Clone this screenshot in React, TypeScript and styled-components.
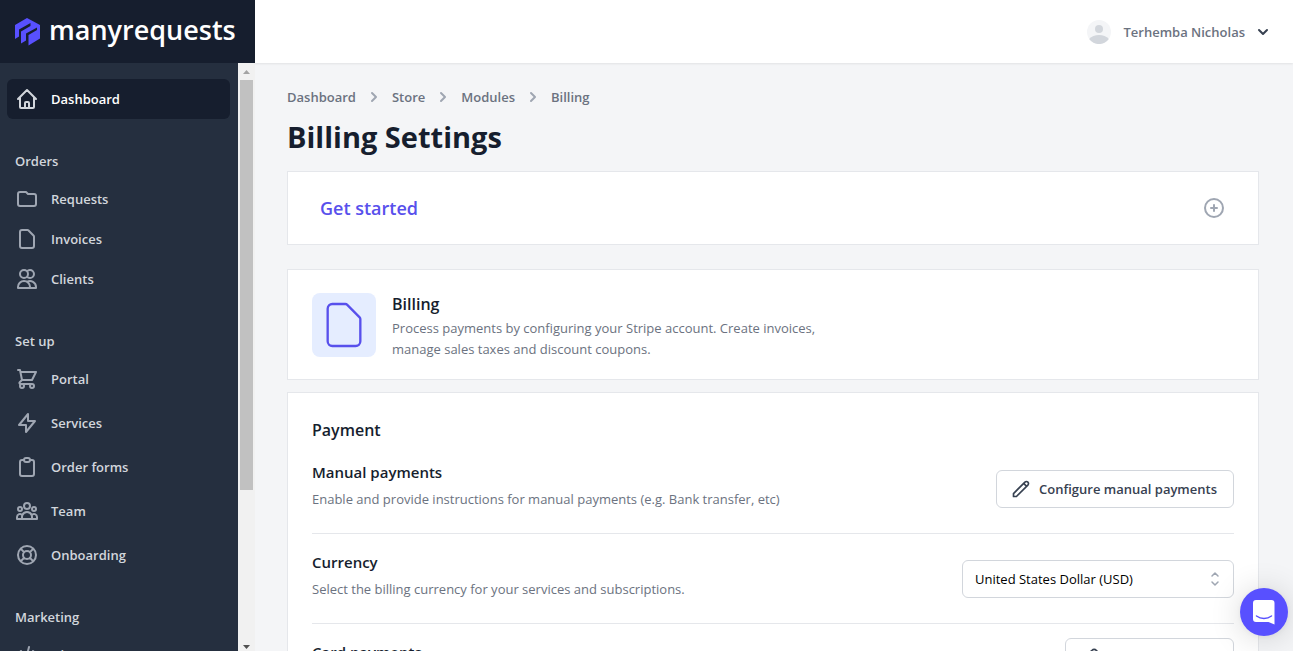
import React from "react";
import styled, { createGlobalStyle, css } from "styled-components";

const GlobalStyle = createGlobalStyle`
  *, *::before, *::after { box-sizing: border-box; }
  body {
    margin: 0;
    background: #f4f5f7;
    color: #161e2e;
    font-family: "Open Sans", "Noto Sans", sans-serif;
    font-size: 14px;
    line-height: 20px;
  }
  h1, h2, h3, p, ul, ol { margin: 0; padding: 0; }
  ul, ol { list-style: none; }
  button, select { font: inherit; cursor: pointer; }
  a { color: inherit; text-decoration: none; }
`;

const Shell = styled.div`
  display: flex;
  height: 100vh;
  overflow: hidden;
`;

const Sidebar = styled.aside`
  display: flex;
  flex-direction: column;
  flex: 0 0 255px;
  background: #252f3f;
`;

const Brand = styled.a`
  display: flex;
  flex: 0 0 63px;
  align-items: center;
  gap: 8px;
  padding: 0 14px;
  background: #161e2e;
  color: #fff;
  font-size: 27px;
  font-weight: 600;
  line-height: 36px;
`;

const BrandName = styled.span`
  padding-bottom: 4px;
`;

const SidebarBody = styled.div`
  display: flex;
  flex: 1;
  min-height: 0;
`;

const Nav = styled.nav`
  flex: 1;
  overflow: hidden;
  padding: 16px 8px 0 7px;
`;

const NavHeading = styled.h2`
  margin: 32px 8px 8px;
  color: #d2d6dc;
  font-size: 13px;
  font-weight: 600;
  line-height: 20px;
`;

const NavList = styled.ul<{ $gap?: number }>`
  display: flex;
  flex-direction: column;
  gap: ${(p) => p.$gap ?? 0}px;
`;

const NavLink = styled.a<{ $active?: boolean }>`
  display: flex;
  align-items: center;
  gap: 12px;
  height: 40px;
  padding: 0 8px;
  border-radius: 6px;
  color: #d2d6dc;
  font-size: 13px;
  font-weight: 600;

  svg { color: #9fa6b2; }

  ${(p) =>
    p.$active &&
    css`
      background: #161e2e;
      color: #fff;
      svg { color: #d2d6dc; }
    `}
`;

const ScrollTrack = styled.div`
  display: flex;
  flex-direction: column;
  flex: 0 0 17px;
  justify-content: space-between;
  padding: 0 2px;
  background: #f1f1f1;
`;

const ScrollThumb = styled.div`
  flex: 0 1 410px;
  margin-bottom: auto;
  background: #c1c1c1;
`;

const ScrollArrow = styled.svg`
  display: block;
  flex: 0 0 17px;
  width: 13px;
`;

const Page = styled.div`
  display: flex;
  flex: 1;
  flex-direction: column;
  min-width: 0;
`;

const TopBar = styled.header`
  z-index: 1;
  display: flex;
  flex: 0 0 63px;
  align-items: center;
  justify-content: flex-end;
  padding: 0 20px;
  background: #fff;
  box-shadow: 0 1px 2px rgba(0, 0, 0, 0.08);
`;

const AccountButton = styled.button`
  display: flex;
  align-items: center;
  padding: 0;
  border: 0;
  background: none;
  color: #6b7280;
  font-size: 13px;
  font-weight: 600;
`;

const AccountName = styled.span`
  margin: 0 8px 0 12px;
`;

const Main = styled.main`
  flex: 1;
  min-height: 0;
  overflow: hidden;
  padding: 24px 34px 0 32px;
`;

const Crumbs = styled.ol`
  display: flex;
  align-items: center;
  color: #6b7280;
  font-size: 13px;
  font-weight: 600;

  li { display: flex; align-items: center; }
  svg { margin: 0 8px; color: #9fa6b2; }
`;

const PageTitle = styled.h1`
  margin: 10px 0 15px;
  font-size: 29px;
  font-weight: 700;
  line-height: 39px;
`;

const Card = styled.section`
  border: 1px solid #e5e7eb;
  background: #fff;
`;

const StartCard = styled(Card)`
  margin-bottom: 24px;
`;

const StartToggle = styled.button`
  display: flex;
  align-items: center;
  justify-content: space-between;
  width: 100%;
  height: 72px;
  padding: 0 32px;
  border: 0;
  background: none;
  color: #5850ec;
  font-size: 18px;
  font-weight: 600;

  svg { color: #9fa6b2; }
`;

const ModuleCard = styled(Card)`
  display: flex;
  gap: 16px;
  margin-bottom: 12px;
  padding: 23px 24px 19px;
`;

const ModuleIcon = styled.div`
  display: grid;
  flex: 0 0 64px;
  height: 64px;
  place-items: center;
  border-radius: 8px;
  background: #e5edff;
  color: #5850ec;
`;

const ModuleTitle = styled.h2`
  margin-bottom: 3px;
  font-size: 16px;
  font-weight: 600;
  line-height: 22px;
`;

const Muted = styled.p`
  color: #6b7280;
  font-size: 13px;
  line-height: 21px;
`;

const ModuleText = styled.div`
  max-width: 448px;
`;

const PaymentCard = styled(Card)`
  padding: 24px;
`;

const SectionTitle = styled.h2`
  font-size: 16px;
  font-weight: 600;
  line-height: 27px;
`;

const SettingRow = styled.div`
  display: flex;
  align-items: flex-start;
  justify-content: space-between;
  padding: 14px 0 23px;
  border-bottom: 1px solid #e5e7eb;
`;

const SettingText = styled.div`
  padding-top: 2px;
`;

const SettingTitle = styled.h3`
  display: block;
  margin-bottom: 5px;
  font-size: 15px;
  font-weight: 600;
  line-height: 24px;
`;

const Control = styled.div<{ $top?: boolean }>`
  padding-top: ${(p) => (p.$top ? 0 : 12)}px;
`;

const OutlineButton = styled.button`
  display: flex;
  align-items: center;
  gap: 8px;
  height: 38px;
  padding: 0 16px 0 14px;
  border: 1px solid #d2d6dc;
  border-radius: 6px;
  background: #fff;
  color: #374151;
  font-size: 13px;
  font-weight: 600;
`;

const SelectBox = styled.div`
  display: grid;
  align-items: center;
  width: 272px;

  > * { grid-area: 1 / 1; }
  svg { justify-self: end; margin-right: 9px; color: #9fa6b2; pointer-events: none; }
`;

const Select = styled.select`
  width: 100%;
  height: 38px;
  padding: 0 40px 0 12px;
  border: 1px solid #d2d6dc;
  border-radius: 6px;
  appearance: none;
  background: #fff;
  color: #000;
  font-size: 13px;
`;

const ChatButton = styled.button`
  position: fixed;
  right: 5px;
  bottom: 15px;
  z-index: 2;
  display: grid;
  width: 48px;
  height: 48px;
  padding: 0;
  place-items: center;
  border: 0;
  border-radius: 50%;
  background: #5850ff;
  box-shadow: 0 1px 6px rgba(0, 0, 0, 0.06), 0 2px 32px rgba(0, 0, 0, 0.16);
`;

const paths: Record<string, string> = {
  home: "M3 12l2-2m0 0l7-7 7 7M5 10v10a1 1 0 001 1h3m10-11l2 2m-2-2v10a1 1 0 01-1 1h-3m-6 0a1 1 0 001-1v-4a1 1 0 011-1h2a1 1 0 011 1v4a1 1 0 001 1m-6 0h6",
  folder: "M3 7v10a2 2 0 002 2h14a2 2 0 002-2V9a2 2 0 00-2-2h-6l-2-2H5a2 2 0 00-2 2z",
  document: "M7 21h10a2 2 0 002-2V9.414a1 1 0 00-.293-.707l-5.414-5.414A1 1 0 0012.586 3H7a2 2 0 00-2 2v14a2 2 0 002 2z",
  users: "M12 4.354a4 4 0 110 5.292M15 21H3v-1a6 6 0 0112 0v1zm0 0h6v-1a6 6 0 00-9-5.197M13 7a4 4 0 11-8 0 4 4 0 018 0z",
  cart: "M3 3h2l.4 2M7 13h10l4-8H5.400M7 13L5.400 5M7 13l-2.293 2.293c-.63.63-.184 1.707.707 1.707H17m0 0a2 2 0 100 4 2 2 0 000-4zm-8 2a2 2 0 11-4 0 2 2 0 014 0z",
  bolt: "M13 10V3L4 14h7v7l9-11h-7z",
  clipboard: "M9 5H7a2 2 0 00-2 2v12a2 2 0 002 2h10a2 2 0 002-2V7a2 2 0 00-2-2h-2M9 5a2 2 0 002 2h2a2 2 0 002-2M9 5a2 2 0 012-2h2a2 2 0 012 2",
  team: "M17 20h5v-2a3 3 0 00-5.356-1.857M17 20H7m10 0v-2c0-.656-.126-1.283-.356-1.857M7 20H2v-2a3 3 0 015.356-1.857M7 20v-2c0-.656.126-1.283.356-1.857m0 0a5.002 5.002 0 019.288 0M15 7a3 3 0 11-6 0 3 3 0 016 0zm6 3a2 2 0 11-4 0 2 2 0 014 0zM7 10a2 2 0 11-4 0 2 2 0 014 0z",
  support: "M18.364 5.636l-3.536 3.536m0 5.656l3.536 3.536M9.172 9.172L5.636 5.636m3.536 9.192l-3.536 3.536M21 12a9 9 0 11-18 0 9 9 0 0118 0zm-5 0a4 4 0 11-8 0 4 4 0 018 0z",
  code: "M10 20l4-16m4 4l4 4-4 4M6 16l-4-4 4-4",
  plus: "M12 9v3m0 0v3m0-3h3m-3 0H9m12 0a9 9 0 11-18 0 9 9 0 0118 0z",
  pencil: "M15.232 5.232l3.536 3.536m-2.036-5.036a2.500 2.500 0 113.536 3.536L6.500 21.036H3v-3.572L16.732 3.732z",
  link: "M13.828 10.172a4 4 0 00-5.656 0l-4 4a4 4 0 105.656 5.656l1.102-1.101m-.758-4.899a4 4 0 005.656 0l4-4a4 4 0 00-5.656-5.656l-1.100 1.100",
};

function Icon({ name, size = 24, stroke = 2 }: { name: string; size?: number; stroke?: number }) {
  return (
    <svg
      width={size}
      height={size}
      viewBox="0 0 24 24"
      fill="none"
      stroke="currentColor"
      strokeWidth={stroke}
      strokeLinecap="round"
      strokeLinejoin="round"
      aria-hidden="true"
    >
      <path d={paths[name]} />
    </svg>
  );
}

function Item({ icon, label, active }: { icon: string; label: string; active?: boolean }) {
  return (
    <li>
      <NavLink href="#" $active={active} aria-current={active ? "page" : undefined}>
        <Icon name={icon} />
        {label}
      </NavLink>
    </li>
  );
}

function LogoMark() {
  return (
    <svg width="27" height="30" viewBox="0 0 27 30" fill="#5850ff" aria-hidden="true">
      <path d="M1 8L13 1L26 8V21.500L14.500 28.500V18L23 13V10.500L12 16.500V23.500L7 26.500V14.500L16.500 9V6L5 12.500V19.500L1 22Z" />
    </svg>
  );
}

const crumbs = ["Dashboard", "Store", "Modules", "Billing"];

export default function App() {
  return (
    <>
      <GlobalStyle />
      <Shell>
        <Sidebar>
          <Brand href="#">
            <LogoMark />
            <BrandName>manyrequests</BrandName>
          </Brand>
          <SidebarBody>
            <Nav aria-label="Main">
              <NavList>
                <Item icon="home" label="Dashboard" active />
              </NavList>
              <NavHeading>Orders</NavHeading>
              <NavList>
                <Item icon="folder" label="Requests" />
                <Item icon="document" label="Invoices" />
                <Item icon="users" label="Clients" />
              </NavList>
              <NavHeading>Set up</NavHeading>
              <NavList $gap={4}>
                <Item icon="cart" label="Portal" />
                <Item icon="bolt" label="Services" />
                <Item icon="clipboard" label="Order forms" />
                <Item icon="team" label="Team" />
                <Item icon="support" label="Onboarding" />
              </NavList>
              <NavHeading>Marketing</NavHeading>
              <NavList>
                <Item icon="code" label="Discounts" />
              </NavList>
            </Nav>
            <ScrollTrack aria-hidden="true">
              <ScrollArrow height="17" viewBox="0 0 13 17">
                <path d="M3 11L6.500 7L10 11Z" fill="#a3a3a3" />
              </ScrollArrow>
              <ScrollThumb />
              <ScrollArrow height="17" viewBox="0 0 13 17">
                <path d="M3 11L6.500 15L10 11Z" fill="#505050" />
              </ScrollArrow>
            </ScrollTrack>
          </SidebarBody>
        </Sidebar>

        <Page>
          <TopBar>
            <AccountButton type="button">
              <svg width="24" height="24" viewBox="0 0 24 24" aria-hidden="true">
                <circle cx="12" cy="12" r="12" fill="#f4f5f7" />
                <circle cx="12" cy="9" r="4" fill="#d2d6dc" />
                <path d="M2.200 19C4.500 16.300 8 15 12 15s7.500 1.300 9.800 4A12 12 0 0 1 2.200 19z" fill="#d2d6dc" />
              </svg>
              <AccountName>Terhemba Nicholas</AccountName>
              <svg width="20" height="20" viewBox="0 0 20 20" fill="#374151" aria-hidden="true">
                <path d="M5.293 7.293a1 1 0 011.414 0L10 10.586l3.293-3.293a1 1 0 111.414 1.414l-4 4a1 1 0 01-1.414 0l-4-4a1 1 0 010-1.414z" />
              </svg>
            </AccountButton>
          </TopBar>
          <Main>
            <nav aria-label="Breadcrumb">
              <Crumbs>
                {crumbs.map((label, i) => (
                  <li key={label}>
                    {i > 0 && (
                      <svg width="20" height="20" viewBox="0 0 20 20" fill="currentColor" aria-hidden="true">
                        <path d="M7.293 14.707a1 1 0 010-1.414L10.586 10 7.293 6.707a1 1 0 011.414-1.414l4 4a1 1 0 010 1.414l-4 4a1 1 0 01-1.414 0z" />
                      </svg>
                    )}
                    <a href="#">{label}</a>
                  </li>
                ))}
              </Crumbs>
            </nav>
            <PageTitle>Billing Settings</PageTitle>

            <StartCard>
              <StartToggle type="button" aria-expanded="false">
                Get started
                <Icon name="plus" />
              </StartToggle>
            </StartCard>

            <ModuleCard>
              <ModuleIcon>
                <Icon name="document" size={56} stroke={1} />
              </ModuleIcon>
              <ModuleText>
                <ModuleTitle>Billing</ModuleTitle>
                <Muted>
                  Process payments by configuring your Stripe account. Create invoices, manage sales taxes and
                  discount coupons.
                </Muted>
              </ModuleText>
            </ModuleCard>

            <PaymentCard>
              <SectionTitle>Payment</SectionTitle>
              <SettingRow>
                <SettingText>
                  <SettingTitle>Manual payments</SettingTitle>
                  <Muted>Enable and provide instructions for manual payments (e.g. Bank transfer, etc)</Muted>
                </SettingText>
                <Control>
                  <OutlineButton type="button">
                    <Icon name="pencil" size={20} />
                    Configure manual payments
                  </OutlineButton>
                </Control>
              </SettingRow>
              <SettingRow>
                <SettingText>
                  <SettingTitle as="label" htmlFor="currency">
                    Currency
                  </SettingTitle>
                  <Muted>Select the billing currency for your services and subscriptions.</Muted>
                </SettingText>
                <Control>
                  <SelectBox>
                    <Select id="currency" defaultValue="usd">
                      <option value="usd">United States Dollar (USD)</option>
                    </Select>
                    <svg width="20" height="20" viewBox="0 0 20 20" fill="none" stroke="currentColor" strokeWidth="1.500" strokeLinecap="round" strokeLinejoin="round" aria-hidden="true">
                      <path d="M7 7l3-3 3 3m0 6l-3 3-3-3" />
                    </svg>
                  </SelectBox>
                </Control>
              </SettingRow>
              <SettingRow>
                <SettingText>
                  <SettingTitle>Card payments</SettingTitle>
                  <Muted>Connect your Stripe account to accept card payments.</Muted>
                </SettingText>
                <Control $top>
                  <OutlineButton type="button">
                    <Icon name="link" size={20} />
                    Connect to Stripe
                  </OutlineButton>
                </Control>
              </SettingRow>
            </PaymentCard>
          </Main>
        </Page>
      </Shell>
      <ChatButton type="button" aria-label="Open chat">
        <svg width="24" height="26" viewBox="0 0 24 26" aria-hidden="true">
          <path d="M4 1h15.500a3 3 0 0 1 3 3v21.500l-6-2.500H4a3 3 0 0 1-3-3V4a3 3 0 0 1 3-3z" fill="#fff" />
          <path d="M4.500 17c4.500 3.200 10.500 3.200 15 0" fill="none" stroke="#5850ff" strokeWidth="1.500" strokeLinecap="round" />
        </svg>
      </ChatButton>
    </>
  );
}
